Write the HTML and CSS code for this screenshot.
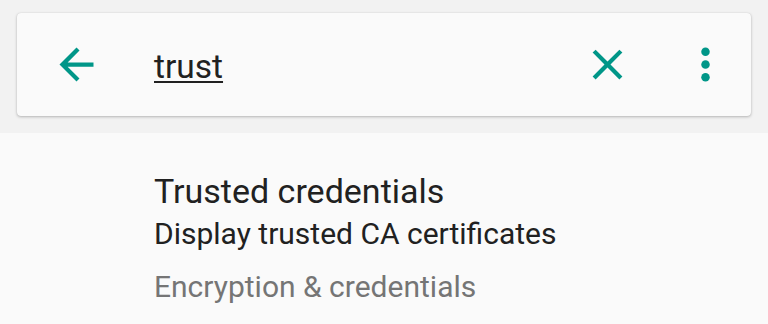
FILE: index.html
```html
<!DOCTYPE html>
<html>
<head>
<meta charset="utf-8">
<link rel="stylesheet" href="styles.css">
</head>
<body>
<div class="top">
  <div class="card">
    <div class="icon back">
      <svg width="51" height="51" viewBox="0 0 24 24"><path d="M20 11H7.83l5.59-5.59L12 4l-8 8 8 8 1.41-1.41L7.83 13H20v-2z" fill="#009688"/></svg>
    </div>
    <div class="query">trust</div>
    <div class="icon clear">
      <svg width="51" height="51" viewBox="0 0 24 24"><path d="M19 6.41L17.59 5 12 10.59 6.41 5 5 6.41 10.59 12 5 17.59 6.41 19 12 13.41 17.59 19 19 17.59 13.41 12z" fill="#009688"/></svg>
    </div>
    <div class="icon more">
      <svg width="51" height="51" viewBox="0 0 24 24"><circle cx="12" cy="6" r="2" fill="#009688"/><circle cx="12" cy="12" r="2" fill="#009688"/><circle cx="12" cy="18" r="2" fill="#009688"/></svg>
    </div>
  </div>
</div>
<div class="result">
  <div class="title">Trusted credentials</div>
  <div class="summary">Display trusted CA certificates</div>
  <div class="path">Encryption &amp; credentials</div>
</div>
</body>
</html>
```
FILE: styles.css
```css
html, body {
  margin: 0;
  padding: 0;
  background: #fafafa;
  font-family: Roboto, "Noto Sans", sans-serif;
  width: 768px;
  height: 324px;
  overflow: hidden;
}
.top {
  background: #f2f2f2;
  height: 133px;
  padding: 13px 17px 0 17px;
  box-sizing: border-box;
}
.card {
  background: #fafafa;
  height: 103px;
  border-radius: 4px;
  box-shadow: 0 1px 3px rgba(0,0,0,0.25), 0 0 1px rgba(0,0,0,0.15);
  display: flex;
  align-items: center;
}
.icon {
  width: 51px;
  height: 51px;
  display: flex;
}
.back {
  margin-left: 34px;
}
.query {
  margin-left: 52px;
  margin-top: 4px;
  font-size: 33.5px;
  color: #212121;
  text-decoration: underline;
  text-decoration-thickness: 2px;
  text-underline-offset: 3px;
  flex: 1;
}
.clear {
  margin-right: 47px;
}
.more {
  margin-right: 20px;
}
.result {
  padding: 38px 0 0 154px;
}
.title {
  font-size: 34px;
  color: #212121;
  line-height: 40px;
}
.summary {
  font-size: 30px;
  color: #212121;
  line-height: 46px;
}
.path {
  font-size: 30px;
  color: #757575;
  line-height: 59px;
}
```
